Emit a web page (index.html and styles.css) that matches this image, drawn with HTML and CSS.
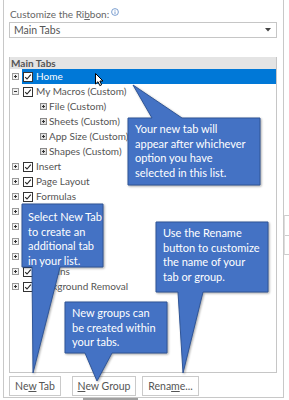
FILE: index.html
```html
<!DOCTYPE html>
<html>
<head>
<meta charset="utf-8">
<link rel="stylesheet" href="styles.css">
</head>
<body>
<div class="top">
  <div class="frame">
    <div class="title"><span>Customize the Ri<u>b</u>bon:</span><svg class="info" width="8" height="8" viewBox="0 0 8 8"><circle cx="4" cy="4" r="3.4" fill="none" stroke="#5a86c4" stroke-width="0.8"/><rect x="3.6" y="3.4" width="0.8" height="2.6" fill="#5a86c4"/><rect x="3.6" y="1.9" width="0.8" height="0.8" fill="#5a86c4"/></svg></div>
    <div class="select"><span>Main Tabs</span><svg class="caret" width="6" height="4" viewBox="0 0 6 4"><path d="M0 0 L6 0 L3 3.5 Z" fill="#444"/></svg></div>
    <div class="list">
      <div class="list-head">Main Tabs</div>
      <div class="row"><span class="exp"></span><span class="item sel"><span class="cb"></span><span class="lbl">Home</span></span></div>
      <div class="row"><span class="exp minus"></span><span class="item"><span class="cb"></span><span class="lbl">My Macros (Custom)</span></span></div>
      <div class="row child"><span class="exp"></span><span class="lbl">File (Custom)</span></div>
      <div class="row child"><span class="exp"></span><span class="lbl">Sheets (Custom)</span></div>
      <div class="row child"><span class="exp"></span><span class="lbl">App Size (Custom)</span></div>
      <div class="row child"><span class="exp"></span><span class="lbl">Shapes (Custom)</span></div>
      <div class="row"><span class="exp"></span><span class="item"><span class="cb"></span><span class="lbl">Insert</span></span></div>
      <div class="row"><span class="exp"></span><span class="item"><span class="cb"></span><span class="lbl">Page Layout</span></span></div>
      <div class="row"><span class="exp"></span><span class="item"><span class="cb"></span><span class="lbl">Formulas</span></span></div>
      <div class="row"><span class="exp"></span><span class="item"><span class="cb"></span></span></div>
      <div class="row"><span class="exp"></span><span class="item"><span class="cb"></span></span></div>
      <div class="row"><span class="exp"></span><span class="item"><span class="cb"></span></span></div>
      <div class="row"><span class="exp"></span><span class="item"><span class="cb"></span></span></div>
      <div class="row"><span class="exp"></span><span class="item"><span class="cb"></span><span class="lbl">Add-ins</span></span></div>
      <div class="row"><span class="exp"></span><span class="item"><span class="cb"></span><span class="lbl">Background Removal</span></span></div>
    </div>
    <div class="buttons">
      <span class="btn b1"><span>Ne<u>w</u> Tab</span></span>
      <span class="btn b2"><span><u>N</u>ew Group</span></span>
      <span class="btn b3"><span>Rena<u>m</u>e...</span></span>
    </div>
  </div>
  <div class="side"><div class="sidebox"><div class="sidecell"></div><div class="sidecell"></div></div></div>
</div>
<div class="thumb"></div>

<svg class="cursor" width="10" height="14" viewBox="0 0 10 14"><path d="M0.5 0.5 L0.5 11 L3 8.7 L4.8 12.6 L6.6 11.8 L4.9 8 L8 8 Z" fill="#fff" stroke="#000" stroke-width="1"/></svg>

<svg class="callouts" width="289" height="400" viewBox="0 0 289 400">
  <polygon points="128,118 152,118 133,85 182,118 260,118 260,185 128,185"/>
  <polygon points="22,204 103,204 103,267 60,267 33,373 32,267 22,267"/>
  <polygon points="156,222 268,222 268,292 203,292 183,373 178,292 156,292"/>
  <polygon points="65,302 167,302 167,353 112,353 97,381 85,353 65,353"/>
</svg>
<div class="ctext c1">Your new tab will<br>appear after whichever<br>option you have<br>selected in this list.</div>
<div class="ctext c2">Select New Tab<br>to create an<br>additional tab<br>in your list.</div>
<div class="ctext c3">Use the Rename<br>button to customize<br>the name of your<br>tab or group.</div>
<div class="ctext c4">New groups can<br>be created within<br>your tabs.</div>
</body>
</html>
```
FILE: styles.css
```css
html, body {
  margin: 0;
  padding: 0;
  background: #fff;
}
body {
  position: relative;
  width: 289px;
  height: 400px;
  overflow: hidden;
  font-family: Lato, "Liberation Sans", sans-serif;
  font-size: 10px;
  color: #555;
}
.top {
  display: flex;
  align-items: flex-start;
}
.frame {
  box-sizing: border-box;
  margin-left: 3px;
  width: 281px;
  height: 398px;
  border-left: 1px solid #c8c8c8;
  border-right: 1px solid #c8c8c8;
  border-bottom: 1px solid #c8c8c8;
  padding: 7px 6px 0 5px;
}
.title {
  height: 14px;
  line-height: 14px;
  padding-left: 1px;
  color: #666;
  font-size: 10px;
  display: flex;
  align-items: center;
}
.info {
  margin-left: 2px;
  margin-top: -5px;
}
.select {
  box-sizing: border-box;
  margin-top: 1px;
  height: 16px;
  border: 1px solid #c6c6c6;
  display: flex;
  align-items: center;
  justify-content: space-between;
  padding: 0 5px 0 4px;
  color: #555;
  font-size: 10.5px;
}
.list {
  box-sizing: border-box;
  margin-top: 19px;
  height: 316px;
  border: 1px solid #c6c6c6;
  border-top: 0;
}
.list-head {
  height: 12px;
  line-height: 12px;
  background: #e4e4e4;
  font-weight: bold;
  color: #555;
  padding-left: 1px;
}
.row {
  height: 15px;
  display: flex;
  align-items: center;
}
.exp {
  box-sizing: border-box;
  width: 7px;
  height: 7px;
  margin-left: 2px;
  margin-right: 3px;
  border: 1px solid #9a9a9a;
  background: #f2f2f2;
  position: relative;
  flex: none;
}
.exp::before, .exp::after {
  content: "";
  position: absolute;
  background: #333;
}
.exp::before { left: 1px; top: 2px; width: 3px; height: 1px; }
.exp::after { left: 2px; top: 1px; width: 1px; height: 3px; }
.exp.minus::after { display: none; }
.item {
  flex: 1;
  height: 15px;
  display: flex;
  align-items: center;
}
.item.sel {
  background: #0078d7;
  color: #fff;
}
.cb {
  box-sizing: border-box;
  width: 10px;
  height: 10px;
  margin-left: 1px;
  margin-right: 3px;
  border: 1px solid #333;
  background: #fff url("data:image/svg+xml;utf8,<svg xmlns='http://www.w3.org/2000/svg' width='8' height='8' viewBox='0 0 8 8'><path d='M1.2 4.2 L3 6 L6.8 1.6' fill='none' stroke='%23222' stroke-width='1.1'/></svg>") no-repeat center;
  flex: none;
}
.row.child .exp {
  margin-left: 30px;
  margin-right: 2px;
  background: #e0e0e0;
  border-color: #888;
}
.lbl {
  white-space: nowrap;
  line-height: 15px;
}
.buttons {
  display: flex;
  margin-top: 3px;
}
.btn {
  box-sizing: border-box;
  height: 20px;
  border: 1px solid #cacaca;
  display: flex;
  align-items: center;
  justify-content: center;
  color: #555;
  font-size: 10.5px;
  white-space: nowrap;
}
.b1 { width: 52px; }
.b2 { width: 64px; margin-left: 11px; }
.b3 { width: 57px; margin-left: 6px; }
.side {
  padding-top: 215px;
  flex: 1;
}
.sidebox {
  height: 38px;
  border-top: 1px solid #ccc;
  border-bottom: 1px solid #ccc;
  border-left: 1px solid #ddd;
}
.sidecell {
  height: 19px;
}
.sidecell + .sidecell {
  border-top: 1px solid #ccc;
  height: 18px;
}
.thumb {
  margin-left: 83px;
  width: 55px;
  height: 2px;
  background: #a0a0a0;
}
.cursor {
  position: absolute;
  left: 95px;
  top: 73px;
}
.callouts {
  position: absolute;
  left: 0;
  top: 0;
  filter: drop-shadow(1px 1px 1px rgba(0,0,0,0.35));
}
.callouts polygon {
  fill: #4472c4;
  stroke: #2f5597;
  stroke-width: 1;
  stroke-linejoin: miter;
}
.ctext {
  position: absolute;
  color: #fff;
  font-family: Lato, "Liberation Sans", sans-serif;
  font-size: 11px;
  line-height: 14.5px;
  white-space: nowrap;
}
.c1 { left: 135px; top: 122px; }
.c2 { left: 28px; top: 210px; }
.c3 { left: 163px; top: 226px; }
.c4 { left: 72px; top: 306px; }
```
